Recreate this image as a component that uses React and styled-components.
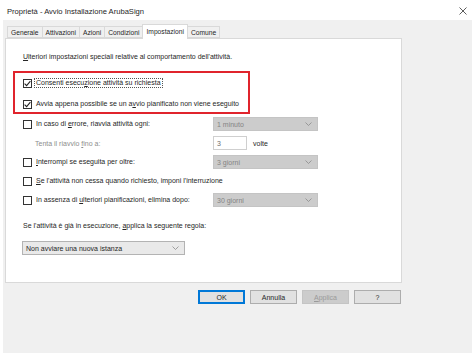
import styled, { createGlobalStyle } from "styled-components";

const GlobalStyle = createGlobalStyle`
	body {
		margin: 0;
		background: #ffffff;
		font-family: "Liberation Sans", Arial, sans-serif;
		font-size: 7px;
		color: #262626;
	}
`;

const Chevron = () => (
	<svg width="7" height="4" viewBox="0 0 7 4">
		<polyline points="0.5,0.5 3.5,3.5 6.5,0.5" fill="none" stroke="#8a8a8a" strokeWidth="0.8" />
	</svg>
);

const Check = () => (
	<svg width="9" height="9" viewBox="0 0 9 9">
		<polyline points="1.6,4.6 3.6,6.6 7.4,2.2" fill="none" stroke="#222" strokeWidth="1.1" />
	</svg>
);

const CheckRow = ({ checked, focus, children }) => (
	<CheckLine>
		<Box>{checked && <Check />}</Box>
		<Label $focus={focus}>{children}</Label>
	</CheckLine>
);

const App = () => {
	return (
		<>
			<GlobalStyle />
			<Window>
				<TitleBar>
					<Title>Proprietà - Avvio Installazione ArubaSign</Title>
					<svg width="8" height="8" viewBox="0 0 8 8">
						<path d="M0.5 0.5 L7.5 7.5 M7.5 0.5 L0.5 7.5" stroke="#333" strokeWidth="0.8" />
					</svg>
				</TitleBar>
				<Dialog>
					<TabStrip>
						<Tab>Generale</Tab>
						<Tab>Attivazioni</Tab>
						<Tab>Azioni</Tab>
						<Tab>Condizioni</Tab>
						<Tab $active>Impostazioni</Tab>
						<Tab>Comune</Tab>
					</TabStrip>
					<Panel>
						<Description>
							<u>U</u>lteriori impostazioni speciali relative al comportamento dell'attività.
						</Description>
						<Highlight>
							<CheckRow checked focus>
								Consenti esecu<u>z</u>ione attività su richiesta
							</CheckRow>
							<CheckRow checked>
								Avvia appena possibile se un a<u>v</u>vio pianificato non viene eseguito
							</CheckRow>
						</Highlight>
						<Rows>
							<Row>
								<CheckRow>
									In caso di <u>e</u>rrore, riavvia attività ogni:
								</CheckRow>
								<Dropdown>
									1 minuto
									<Chevron />
								</Dropdown>
							</Row>
							<Row>
								<Muted>
									Tenta il riavvio <u>f</u>ino a:
								</Muted>
								<InputGroup>
									<NumberBox>3</NumberBox>
									volte
								</InputGroup>
							</Row>
							<Row>
								<CheckRow>
									<u>I</u>nterrompi se eseguita per oltre:
								</CheckRow>
								<Dropdown>
									3 giorni
									<Chevron />
								</Dropdown>
							</Row>
							<Row>
								<CheckRow>
									<u>S</u>e l'attività non cessa quando richiesto, imponi l'interruzione
								</CheckRow>
							</Row>
							<Row>
								<CheckRow>
									In assenza di <u>u</u>lteriori pianificazioni, elimina dopo:
								</CheckRow>
								<Dropdown>
									30 giorni
									<Chevron />
								</Dropdown>
							</Row>
						</Rows>
						<RuleLabel>
							Se l'attività è già in esecuzione, <u>a</u>pplica la seguente regola:
						</RuleLabel>
						<Select>
							Non avviare una nuova istanza
							<Chevron />
						</Select>
					</Panel>
					<ButtonRow>
						<Button $default>OK</Button>
						<Button>Annulla</Button>
						<Button $disabled>
							<u>A</u>pplica
						</Button>
						<Button>?</Button>
					</ButtonRow>
				</Dialog>
			</Window>
		</>
	);
};

export default App;

const Window = styled.div`
	width: 474px;
	height: 356px;
	background: #ffffff;
	overflow: hidden;
`;

const TitleBar = styled.div`
	display: flex;
	align-items: center;
	justify-content: space-between;
	height: 20px;
	padding: 2px 7px 0 7px;
	box-sizing: border-box;
`;

const Title = styled.div`
	font-size: 7.6px;
`;

const Dialog = styled.div`
	margin-left: 3px;
	width: 469px;
	height: 333px;
	background: #f0f0f0;
	padding: 4px 0 0 2px;
	box-sizing: border-box;
`;

const TabStrip = styled.div`
	display: flex;
	align-items: flex-end;
	height: 14px;
	padding-left: 3px;
`;

const Tab = styled.div`
	height: ${(p) => (p.$active ? "15px" : "12px")};
	margin-bottom: ${(p) => (p.$active ? "-1px" : "0")};
	padding: 0 3px ${(p) => (p.$active ? "2px" : "0")} 3px;
	display: flex;
	align-items: center;
	box-sizing: border-box;
	font-size: 6.7px;
	border: 1px solid #d9d9d9;
	border-bottom: ${(p) => (p.$active ? "none" : "1px solid #d9d9d9")};
	margin-left: -1px;
	background: ${(p) => (p.$active ? "#ffffff" : "#f0f0f0")};
	position: relative;
	z-index: ${(p) => (p.$active ? 1 : 0)};
`;

const Panel = styled.div`
	width: 397px;
	height: 245px;
	background: #ffffff;
	border: 1px solid #d9d9d9;
	box-sizing: border-box;
	padding: 13px 0 0 17px;
`;

const Description = styled.div`
	height: 10px;
	line-height: 10px;
`;

const Highlight = styled.div`
	width: 237px;
	box-sizing: border-box;
	margin: 9px 0 0 -10px;
	border: 2px solid #e0242c;
	padding: 5px 8px 3px 8px;
	display: flex;
	flex-direction: column;
	gap: 11px;
`;

const CheckLine = styled.div`
	display: flex;
	align-items: center;
	height: 10px;
	gap: 2px;
`;

const Box = styled.div`
	width: 9px;
	height: 9px;
	box-sizing: border-box;
	border: 1px solid #333333;
	background: #ffffff;
	display: flex;
	align-items: center;
	justify-content: center;
	flex-shrink: 0;

	svg {
		margin: -1px;
	}
`;

const Label = styled.span`
	padding: 0 1px;
	line-height: 8px;
	border: 1px dotted ${(p) => (p.$focus ? "#555" : "transparent")};
	white-space: nowrap;
`;

const Rows = styled.div`
	display: flex;
	flex-direction: column;
	gap: 5px;
	margin-top: 3px;
`;

const Row = styled.div`
	display: grid;
	grid-template-columns: 190px auto;
	align-items: center;
	height: 14px;
`;

const Muted = styled.div`
	color: #8d8d8d;
	padding-left: 12px;
`;

const Dropdown = styled.div`
	width: 105px;
	height: 14px;
	box-sizing: border-box;
	background: #cccccc;
	border: 1px solid #c4c4c4;
	color: #848484;
	display: flex;
	align-items: center;
	justify-content: space-between;
	padding: 0 5px 0 3px;
`;

const InputGroup = styled.div`
	display: flex;
	align-items: center;
	gap: 6px;
`;

const NumberBox = styled.div`
	width: 34px;
	height: 14px;
	box-sizing: border-box;
	border: 1px solid #cfcfcf;
	color: #6d6d6d;
	display: flex;
	align-items: center;
	padding-left: 3px;
`;

const RuleLabel = styled.div`
	margin-top: 14px;
	height: 10px;
	line-height: 10px;
`;

const Select = styled.div`
	margin: 10px 0 0 -1px;
	width: 163px;
	height: 14px;
	box-sizing: border-box;
	background: #e9e9e9;
	border: 1px solid #b3b3b3;
	display: flex;
	align-items: center;
	justify-content: space-between;
	padding: 0 5px 0 3px;
`;

const ButtonRow = styled.div`
	width: 396px;
	display: flex;
	justify-content: flex-end;
	gap: 5px;
	margin-top: 7px;
`;

const Button = styled.div`
	width: 47px;
	height: 14px;
	box-sizing: border-box;
	display: flex;
	align-items: center;
	justify-content: center;
	background: ${(p) => (p.$disabled ? "#cccccc" : "#e1e1e1")};
	color: ${(p) => (p.$disabled ? "#9a9a9a" : "#262626")};
	border: 1px solid ${(p) => (p.$default ? "#0078d7" : p.$disabled ? "#c4c4c4" : "#adadad")};
	box-shadow: ${(p) => (p.$default ? "inset 0 0 0 1px #0078d7" : "none")};
`;
